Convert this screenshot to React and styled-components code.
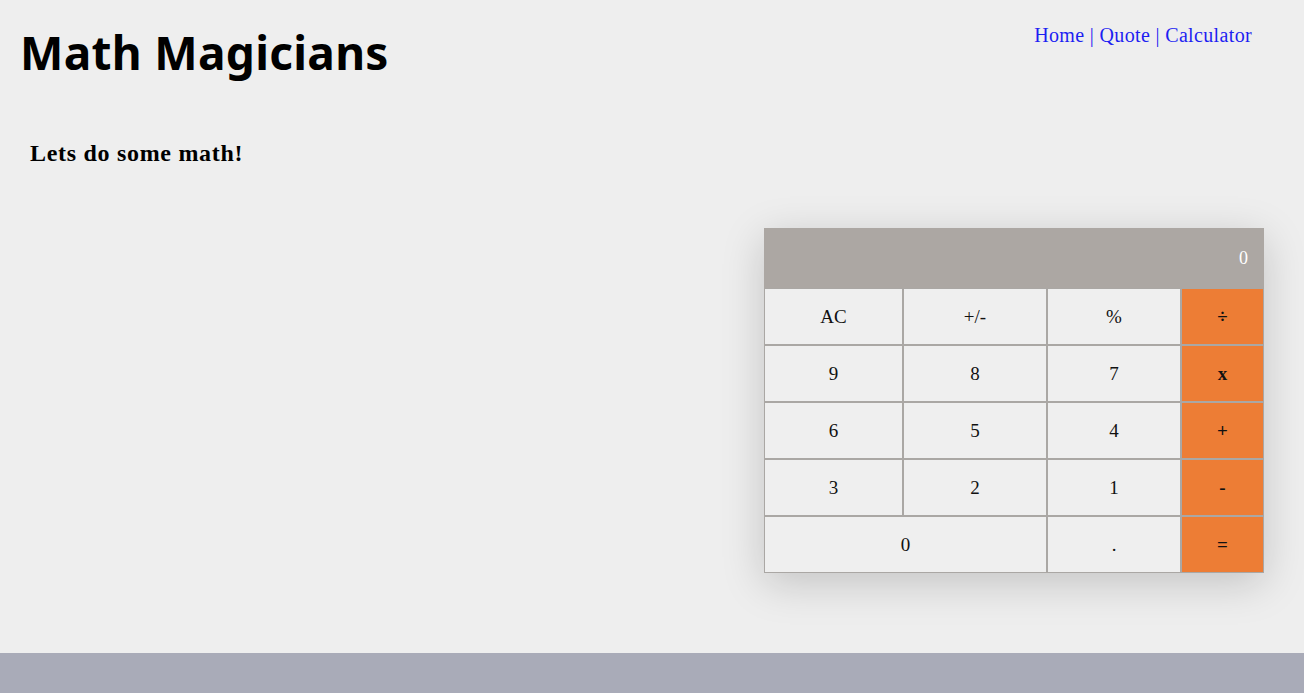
import React from 'react';
import styled, { createGlobalStyle } from 'styled-components';

const Global = createGlobalStyle`
  html, body { margin: 0; padding: 0; }
  body { background: #eeeeee; font-family: "Liberation Serif", serif; }
`;

const Page = styled.div`
  min-height: 100vh;
  display: flex;
  flex-direction: column;
`;

const Header = styled.header`
  display: flex;
  justify-content: space-between;
  align-items: flex-start;
  padding: 0 52px 0 20px;
`;

const Title = styled.h1`
  margin: 24px 0 0;
  font-family: "Noto Sans", sans-serif;
  font-weight: 700;
  font-size: 46px;
  line-height: 56px;
  color: #000;
  letter-spacing: 0.3px;
`;

const Nav = styled.nav`
  margin-top: 22px;
  font-size: 20px;
  letter-spacing: 0.35px;
  color: #1d1ef2;
  line-height: 26px;
`;

const NavLink = styled.a`
  color: #1d1ef2;
  text-decoration: none;
`;

const Main = styled.main`
  flex: 1;
  display: flex;
  justify-content: space-between;
  align-items: flex-start;
  padding: 0 40px 0 30px;
`;

const Lead = styled.h2`
  margin: 58px 0 0;
  font-size: 24px;
  letter-spacing: 0.7px;
  font-weight: 700;
  line-height: 30px;
`;

const Calc = styled.div`
  margin-top: 148px;
  width: 500px;
  box-shadow: 0 10px 40px rgba(0, 0, 0, 0.18);
  display: grid;
  grid-template-columns: 139px 144px 134px 83px;
`;

const Display = styled.div`
  grid-column: 1 / -1;
  height: 60px;
  background: #aca7a3;
  color: #fff;
  font-size: 18px;
  display: flex;
  align-items: center;
  justify-content: flex-end;
  padding: 0 16px;
`;

const Key = styled.button`
  height: 57px;
  border: 1px solid #aaa7a4;
  background: ${p => (p.$op ? '#ed7d35' : '#efefef')};
  font-family: "Liberation Serif", serif;
  font-size: 19px;
  font-weight: ${p => (p.$op ? 700 : 400)};
  color: #111;
  grid-column: ${p => (p.$span ? `span ${p.$span}` : 'auto')};
  padding: 0;
`;

const Footer = styled.footer`
  height: 40px;
  background: #a9abb8;
`;

const rows = [
  ['AC', '+/-', '%', '÷'],
  ['9', '8', '7', 'x'],
  ['6', '5', '4', '+'],
  ['3', '2', '1', '-'],
];

export default function App() {
  return (
    <Page>
      <Global />
      <Header>
        <Title>Math Magicians</Title>
        <Nav>
          <NavLink href="#">Home</NavLink> | <NavLink href="#">Quote</NavLink> | <NavLink href="#">Calculator</NavLink>
        </Nav>
      </Header>
      <Main>
        <Lead>Lets do some math!</Lead>
        <Calc>
          <Display>0</Display>
          {rows.map((r) =>
            r.map((k, i) => (
              <Key key={k} $op={i === 3}>{k}</Key>
            ))
          )}
          <Key $span={2}>0</Key>
          <Key>.</Key>
          <Key $op>=</Key>
        </Calc>
      </Main>
      <Footer />
    </Page>
  );
}
